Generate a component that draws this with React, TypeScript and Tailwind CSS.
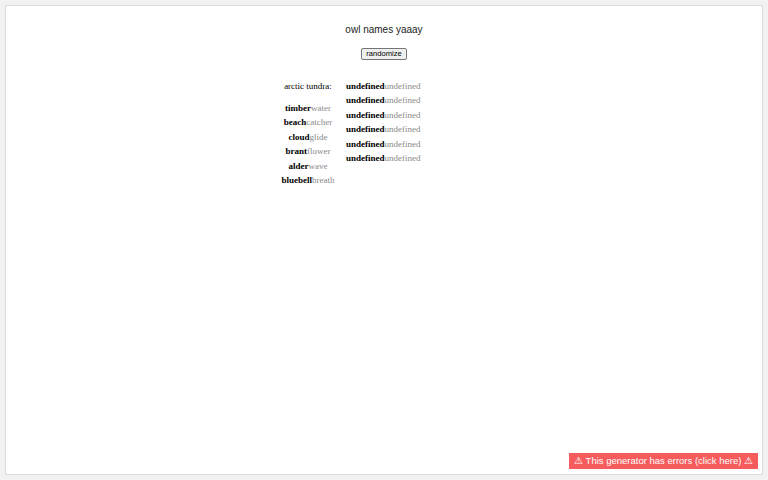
import React from "react";

const left = [
  ["timber", "water"],
  ["beach", "catcher"],
  ["cloud", "glide"],
  ["brant", "flower"],
  ["alder", "wave"],
  ["bluebell", "breath"],
];

const App: React.FC = () => {
  return (
    <div className="h-[480px] w-[768px] bg-[#f2f2f2] p-[5px]">
      <div className="relative h-[470px] w-[758px] border border-[#dcdcdc] bg-white">
        {/* Title */}
        <div className="pt-[17px] text-center font-['Liberation_Sans',Arial,sans-serif] text-[10px] leading-[13px] text-[#222]">
          owl names yaaay
        </div>
        <div className="mt-[12px] flex justify-center">
          <button className="h-[12px] rounded-[2px] border border-[#767676] bg-[#efefef] px-[4px] font-['Liberation_Sans',Arial,sans-serif] text-[7.6px] leading-[10px] text-black">
            randomize
          </button>
        </div>

        {/* Names */}
        <div className="mt-[19px] flex pl-[274px] font-['Liberation_Serif','Times_New_Roman',serif] text-[9px] leading-[14.4px]">
          <div className="w-[56px] text-center">
            <div className="text-black">arctic tundra:</div>
            <div className="mt-[7.5px]">
              {left.map(([a, b]) => (
                <div key={a}>
                  <span className="font-bold text-black">{a}</span>
                  <span className="text-[#8a8a8a]">{b}</span>
                </div>
              ))}
            </div>
          </div>
          <div className="ml-[10px]">
            {Array.from({ length: 6 }).map((_, i) => (
              <div key={i}>
                <span className="font-bold text-black">undefined</span>
                <span className="text-[#8a8a8a]">undefined</span>
              </div>
            ))}
          </div>
        </div>

        {/* Error badge */}
        <div className="absolute bottom-[5px] right-[4px] flex h-[16px] items-center bg-[#f75c5c] px-[5px] font-['Liberation_Sans',Arial,sans-serif] text-[9.5px] text-white">
          ⚠ This generator has errors (click here) ⚠
        </div>
      </div>
    </div>
  );
};

export default App;
